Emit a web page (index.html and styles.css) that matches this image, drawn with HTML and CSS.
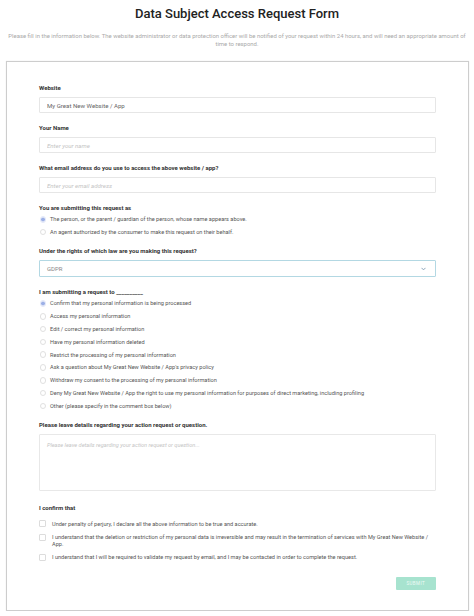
FILE: index.html
```html
<!DOCTYPE html>
<html lang="en">
<head>
<meta charset="utf-8">
<title>Data Subject Access Request Form</title>
<link rel="stylesheet" href="styles.css">
</head>
<body>
<h1 class="title">Data Subject Access Request Form</h1>
<p class="intro">Please fill in the information below. The website administrator or data protection officer will be notified of your request within 24 hours, and will need an appropriate amount of time to respond.</p>
<form class="card">
  <div class="field">
    <label class="label">Website</label>
    <input class="input" type="text" value="My Great New Website / App">
  </div>
  <div class="field">
    <label class="label">Your Name</label>
    <input class="input" type="text" placeholder="Enter your name">
  </div>
  <div class="field">
    <label class="label">What email address do you use to access the above website / app?</label>
    <input class="input" type="text" placeholder="Enter your email address">
  </div>
  <div class="field choices">
    <div class="label tight">You are submitting this request as</div>
    <label class="option"><span class="radio checked"></span><span>The person, or the parent / guardian of the person, whose name appears above.</span></label>
    <label class="option"><span class="radio"></span><span>An agent authorized by the consumer to make this request on their behalf.</span></label>
  </div>
  <div class="field">
    <div class="label">Under the rights of which law are you making this request?</div>
    <div class="select"><span>GDPR</span>
      <svg class="chevron" width="5" height="4" viewBox="0 0 10 7"><path d="M1 1.2 L5 5.2 L9 1.2" fill="none" stroke="#7f9bb3" stroke-width="1.8"/></svg>
    </div>
  </div>
  <div class="field choices">
    <div class="label tight">I am submitting a request to __________</div>
    <label class="option"><span class="radio checked"></span><span>Confirm that my personal information is being processed</span></label>
    <label class="option"><span class="radio"></span><span>Access my personal information</span></label>
    <label class="option"><span class="radio"></span><span>Edit / correct my personal information</span></label>
    <label class="option"><span class="radio"></span><span>Have my personal information deleted</span></label>
    <label class="option"><span class="radio"></span><span>Restrict the processing of my personal information</span></label>
    <label class="option"><span class="radio"></span><span>Ask a question about My Great New Website / App's privacy policy</span></label>
    <label class="option"><span class="radio"></span><span>Withdraw my consent to the processing of my personal information</span></label>
    <label class="option"><span class="radio"></span><span>Deny My Great New Website / App the right to use my personal information for purposes of direct marketing, including profiling</span></label>
    <label class="option"><span class="radio"></span><span>Other (please specify in the comment box below)</span></label>
  </div>
  <div class="field area-field">
    <label class="label">Please leave details regarding your action request or question.</label>
    <textarea class="textarea" placeholder="Please leave details regarding your action request or question..."></textarea>
  </div>
  <div class="field confirm">
    <div class="label">I confirm that</div>
    <label class="check"><span class="box"></span><span class="check-text">Under penalty of perjury, I declare all the above information to be true and accurate.</span></label>
    <label class="check"><span class="box"></span><span class="check-text">I understand that the deletion or restriction of my personal data is irreversible and may result in the termination of services with My Great New Website / App.</span></label>
    <label class="check"><span class="box"></span><span class="check-text">I understand that I will be required to validate my request by email, and I may be contacted in order to complete the request.</span></label>
  </div>
  <div class="actions"><button class="submit" type="button">SUBMIT</button></div>
</form>
</body>
</html>
```
FILE: styles.css
```css
* { box-sizing: border-box; }
body {
  margin: 0;
  background: #ffffff;
  font-family: Roboto, "Liberation Sans", sans-serif;
  color: #333;
}
.title {
  margin: 0;
  padding-top: 6px;
  font-size: 13px;
  line-height: 16px;
  font-weight: 500;
  color: #222;
  text-align: center;
}
.intro {
  margin: 10px 3px 0;
  font-size: 5.95px;
  line-height: 8px;
  color: #a9a9a9;
  text-align: center;
}
.card {
  display: flex;
  flex-direction: column;
  width: 463px;
  margin: 13px 0 0 6px;
  padding: 22px 32px 20px;
  border: 1px solid #cdcdcd;
  box-shadow: 0 0 1px rgba(0,0,0,0.12);
}
.field {
  display: flex;
  flex-direction: column;
  margin-bottom: 11px;
}
.field.choices { margin-bottom: 8.5px; }
.field.area-field { margin-bottom: 12.5px; }
.field.confirm { margin-bottom: 0; }
.label {
  display: block;
  font-size: 6px;
  line-height: 8px;
  font-weight: 700;
  color: #333;
  margin-bottom: 5px;
}
.label.tight { margin-bottom: 1px; }
.confirm .label { margin-bottom: 8.5px; }
.input {
  height: 16px;
  width: 100%;
  margin: 0;
  padding: 0 7px;
  border: 1px solid #e6e6e6;
  border-radius: 1px;
  background: #fff;
  font-family: Roboto, "Liberation Sans", sans-serif;
  font-size: 6.1px;
  color: #666;
  outline: none;
}
.input::placeholder, .textarea::placeholder {
  color: #c4c4c4;
  font-style: italic;
}
.option {
  display: flex;
  align-items: center;
  height: 12.8px;
  font-size: 5.6px;
  color: #555;
}
.radio {
  flex: none;
  width: 6.5px;
  height: 6.5px;
  margin: 0 4px 0 0.5px;
  border: 0.6px solid #e0e0e0;
  border-radius: 50%;
  background: #fff;
}
.radio.checked {
  border-color: #e3e8f8;
  background: radial-gradient(circle, #9cb0e6 0 1.6px, #e8ecf9 2.2px);
}
.select {
  display: flex;
  align-items: center;
  justify-content: space-between;
  height: 17px;
  padding: 0 9px 0 7px;
  border: 1px solid #b3d8e3;
  border-radius: 1px;
  font-size: 6px;
  color: #888;
}
.chevron { display: block; }
.textarea {
  display: block;
  width: 100%;
  height: 57.5px;
  margin: 0;
  padding: 6px 7px;
  border: 1px solid #e8e8e8;
  border-radius: 1px;
  resize: none;
  font-family: Roboto, "Liberation Sans", sans-serif;
  font-size: 5.6px;
  line-height: 8px;
  outline: none;
}
.check {
  display: flex;
  align-items: flex-start;
  margin-bottom: 6.5px;
  font-size: 5.6px;
  color: #555;
}
.check:last-child { margin-bottom: 0; }
.box {
  flex: none;
  width: 7px;
  height: 7px;
  margin-right: 6px;
  border: 0.6px solid #dcdcdc;
  border-radius: 1px;
  background: #fff;
}
.check-text {
  line-height: 6.5px;
  margin-top: 0.25px;
}
.actions {
  display: flex;
  justify-content: flex-end;
  margin-top: 16.5px;
}
.submit {
  width: 40.5px;
  height: 13.3px;
  padding: 0;
  border: none;
  border-radius: 1px;
  background: #a7e3cf;
  color: #eefaf5;
  font-family: Roboto, "Liberation Sans", sans-serif;
  font-size: 4.5px;
  letter-spacing: 0.4px;
}
```
